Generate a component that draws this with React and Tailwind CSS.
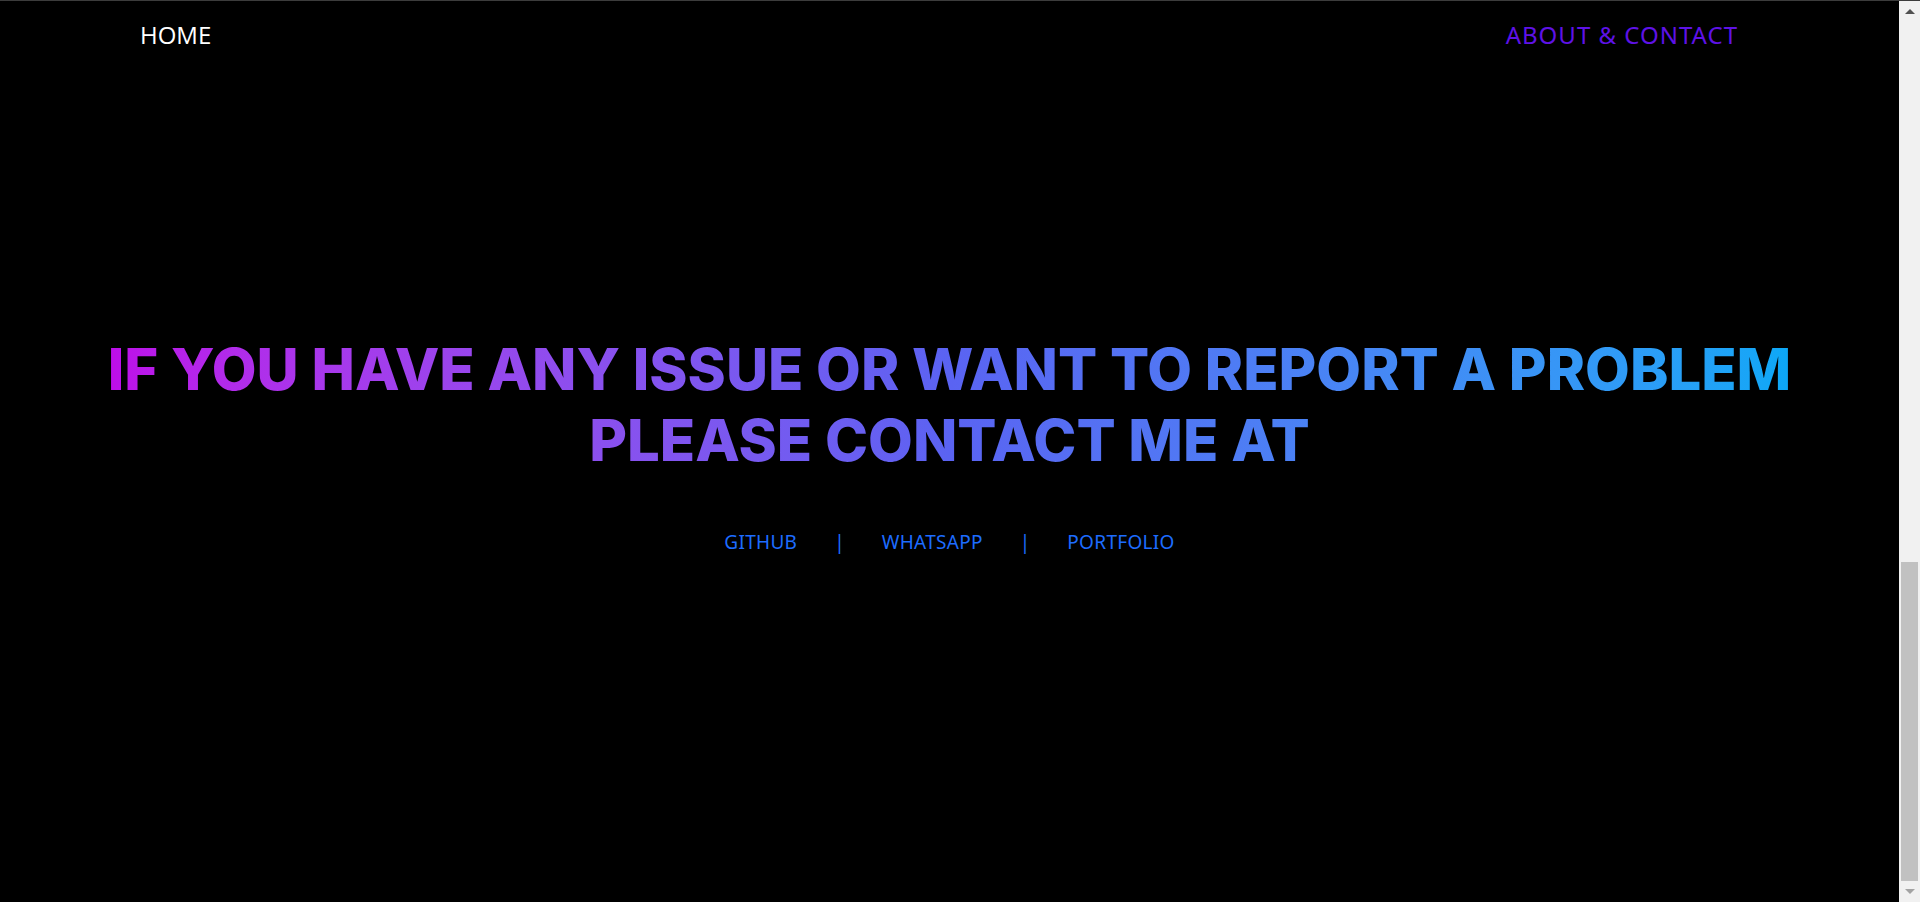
import React from 'react';

const links = ['GITHUB', 'WHATSAPP', 'PORTFOLIO'];

const Scrollbar = () => (
  <div className="flex h-full w-[21px] shrink-0 flex-col bg-[#f1f1f1]">
    <div className="flex h-[21px] items-center justify-center">
      <div className="h-0 w-0 border-x-[5px] border-b-[5px] border-x-transparent border-b-[#505050]" />
    </div>
    <div className="flex-1 flex flex-col px-[2px]">
      <div className="flex-1" />
      <div className="h-[319px] bg-[#c1c1c1]" />
    </div>
    <div className="flex h-[21px] items-center justify-center">
      <div className="h-0 w-0 border-x-[5px] border-t-[5px] border-x-transparent border-t-[#a3a3a3]" />
    </div>
  </div>
);

export default function App() {
  return (
    <div className="flex h-[902px] w-full overflow-hidden border-t border-[#3c3c3c] bg-black">
      <div className="flex flex-1 flex-col">
        <nav className="flex items-center justify-between pl-[140px] pr-[161px] pt-[17px] text-[24px] leading-[34px]">
          <a className="text-white" style={{ fontFamily: '"Open Sans", "Noto Sans", sans-serif' }}>HOME</a>
          <a className="tracking-[1px] text-[#5e12e6]" style={{ fontFamily: '"Noto Sans", "Open Sans", sans-serif' }}>ABOUT &amp; CONTACT</a>
        </nav>

        <main className="flex flex-col items-center pt-[282px]">
          <h1
            className="w-fit bg-gradient-to-r from-[#bd0ce9] via-[#5a63f2] to-[#0aa8f7] bg-clip-text text-center text-[58px] font-extrabold leading-[71px] text-transparent"
            style={{ fontFamily: 'Inter, "Noto Sans", sans-serif' }}
          >
            IF YOU HAVE ANY ISSUE OR WANT TO REPORT A PROBLEM
            <br />
            PLEASE CONTACT ME AT
          </h1>

          <div
            className="mt-[52px] flex items-center text-[19px] text-[#1d6cff]"
            style={{ fontFamily: '"Noto Sans", sans-serif' }}
          >
            {links.map((l, i) => (
              <React.Fragment key={l}>
                {i > 0 && <span className="px-[37px]">|</span>}
                <a className="tracking-[0.3px]">{l}</a>
              </React.Fragment>
            ))}
          </div>
        </main>
      </div>
      <Scrollbar />
    </div>
  );
}
